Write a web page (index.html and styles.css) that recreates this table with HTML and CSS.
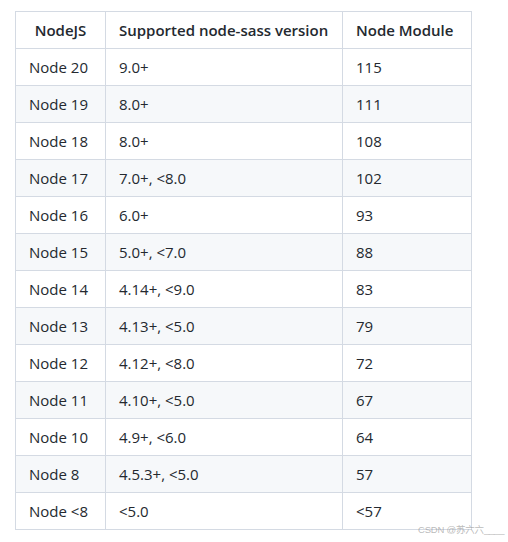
FILE: index.html
```html
<!DOCTYPE html>
<html>
<head>
<meta charset="utf-8">
<link rel="stylesheet" href="styles.css">
</head>
<body>
<div class="page">
<table class="tbl">
<thead>
<tr><th class="c1">NodeJS</th><th class="c2">Supported node-sass version</th><th class="c3">Node Module</th></tr>
</thead>
<tbody>
<tr><td>Node 20</td><td>9.0+</td><td>115</td></tr>
<tr><td>Node 19</td><td>8.0+</td><td>111</td></tr>
<tr><td>Node 18</td><td>8.0+</td><td>108</td></tr>
<tr><td>Node 17</td><td>7.0+, &lt;8.0</td><td>102</td></tr>
<tr><td>Node 16</td><td>6.0+</td><td>93</td></tr>
<tr><td>Node 15</td><td>5.0+, &lt;7.0</td><td>88</td></tr>
<tr><td>Node 14</td><td>4.14+, &lt;9.0</td><td>83</td></tr>
<tr><td>Node 13</td><td>4.13+, &lt;5.0</td><td>79</td></tr>
<tr><td>Node 12</td><td>4.12+, &lt;8.0</td><td>72</td></tr>
<tr><td>Node 11</td><td>4.10+, &lt;5.0</td><td>67</td></tr>
<tr><td>Node 10</td><td>4.9+, &lt;6.0</td><td>64</td></tr>
<tr><td>Node 8</td><td>4.5.3+, &lt;5.0</td><td>57</td></tr>
<tr><td>Node &lt;8</td><td>&lt;5.0</td><td>&lt;57</td></tr>
</tbody>
</table>
<div class="wm">CSDN @苏六六____</div>
</div>
</body>
</html>
```
FILE: styles.css
```css
html, body { margin: 0; padding: 0; background: #fff; }
.page { position: relative; width: 508px; height: 542px; padding: 11px 0 0 15px; box-sizing: border-box; overflow: hidden; }
.tbl {
  border-collapse: collapse;
  font-family: "Open Sans", "Noto Sans", sans-serif;
  font-size: 15px;
  color: #24292f;
  table-layout: fixed;
  width: 456px;
}
.tbl th, .tbl td {
  border: 1px solid #d4dae3;
  height: 37px;
  padding: 0 13px;
  text-align: left;
  line-height: 20px;
  box-sizing: border-box;
}
.tbl th { font-weight: 600; }
.tbl th.c1 { text-align: center; width: 90px; }
.tbl th.c2 { width: 237px; }
.tbl th.c3 { width: 129px; }
.tbl tbody tr:nth-child(even) td { background: #f6f8fa; }
.wm {
  position: absolute;
  left: 418px;
  top: 523px;
  white-space: nowrap;
  font-family: "Liberation Sans", "Noto Sans CJK SC", sans-serif;
  font-size: 9.5px;
  letter-spacing: -0.2px;
  color: rgba(140,140,140,0.6);
  line-height: 13px;
}
```
